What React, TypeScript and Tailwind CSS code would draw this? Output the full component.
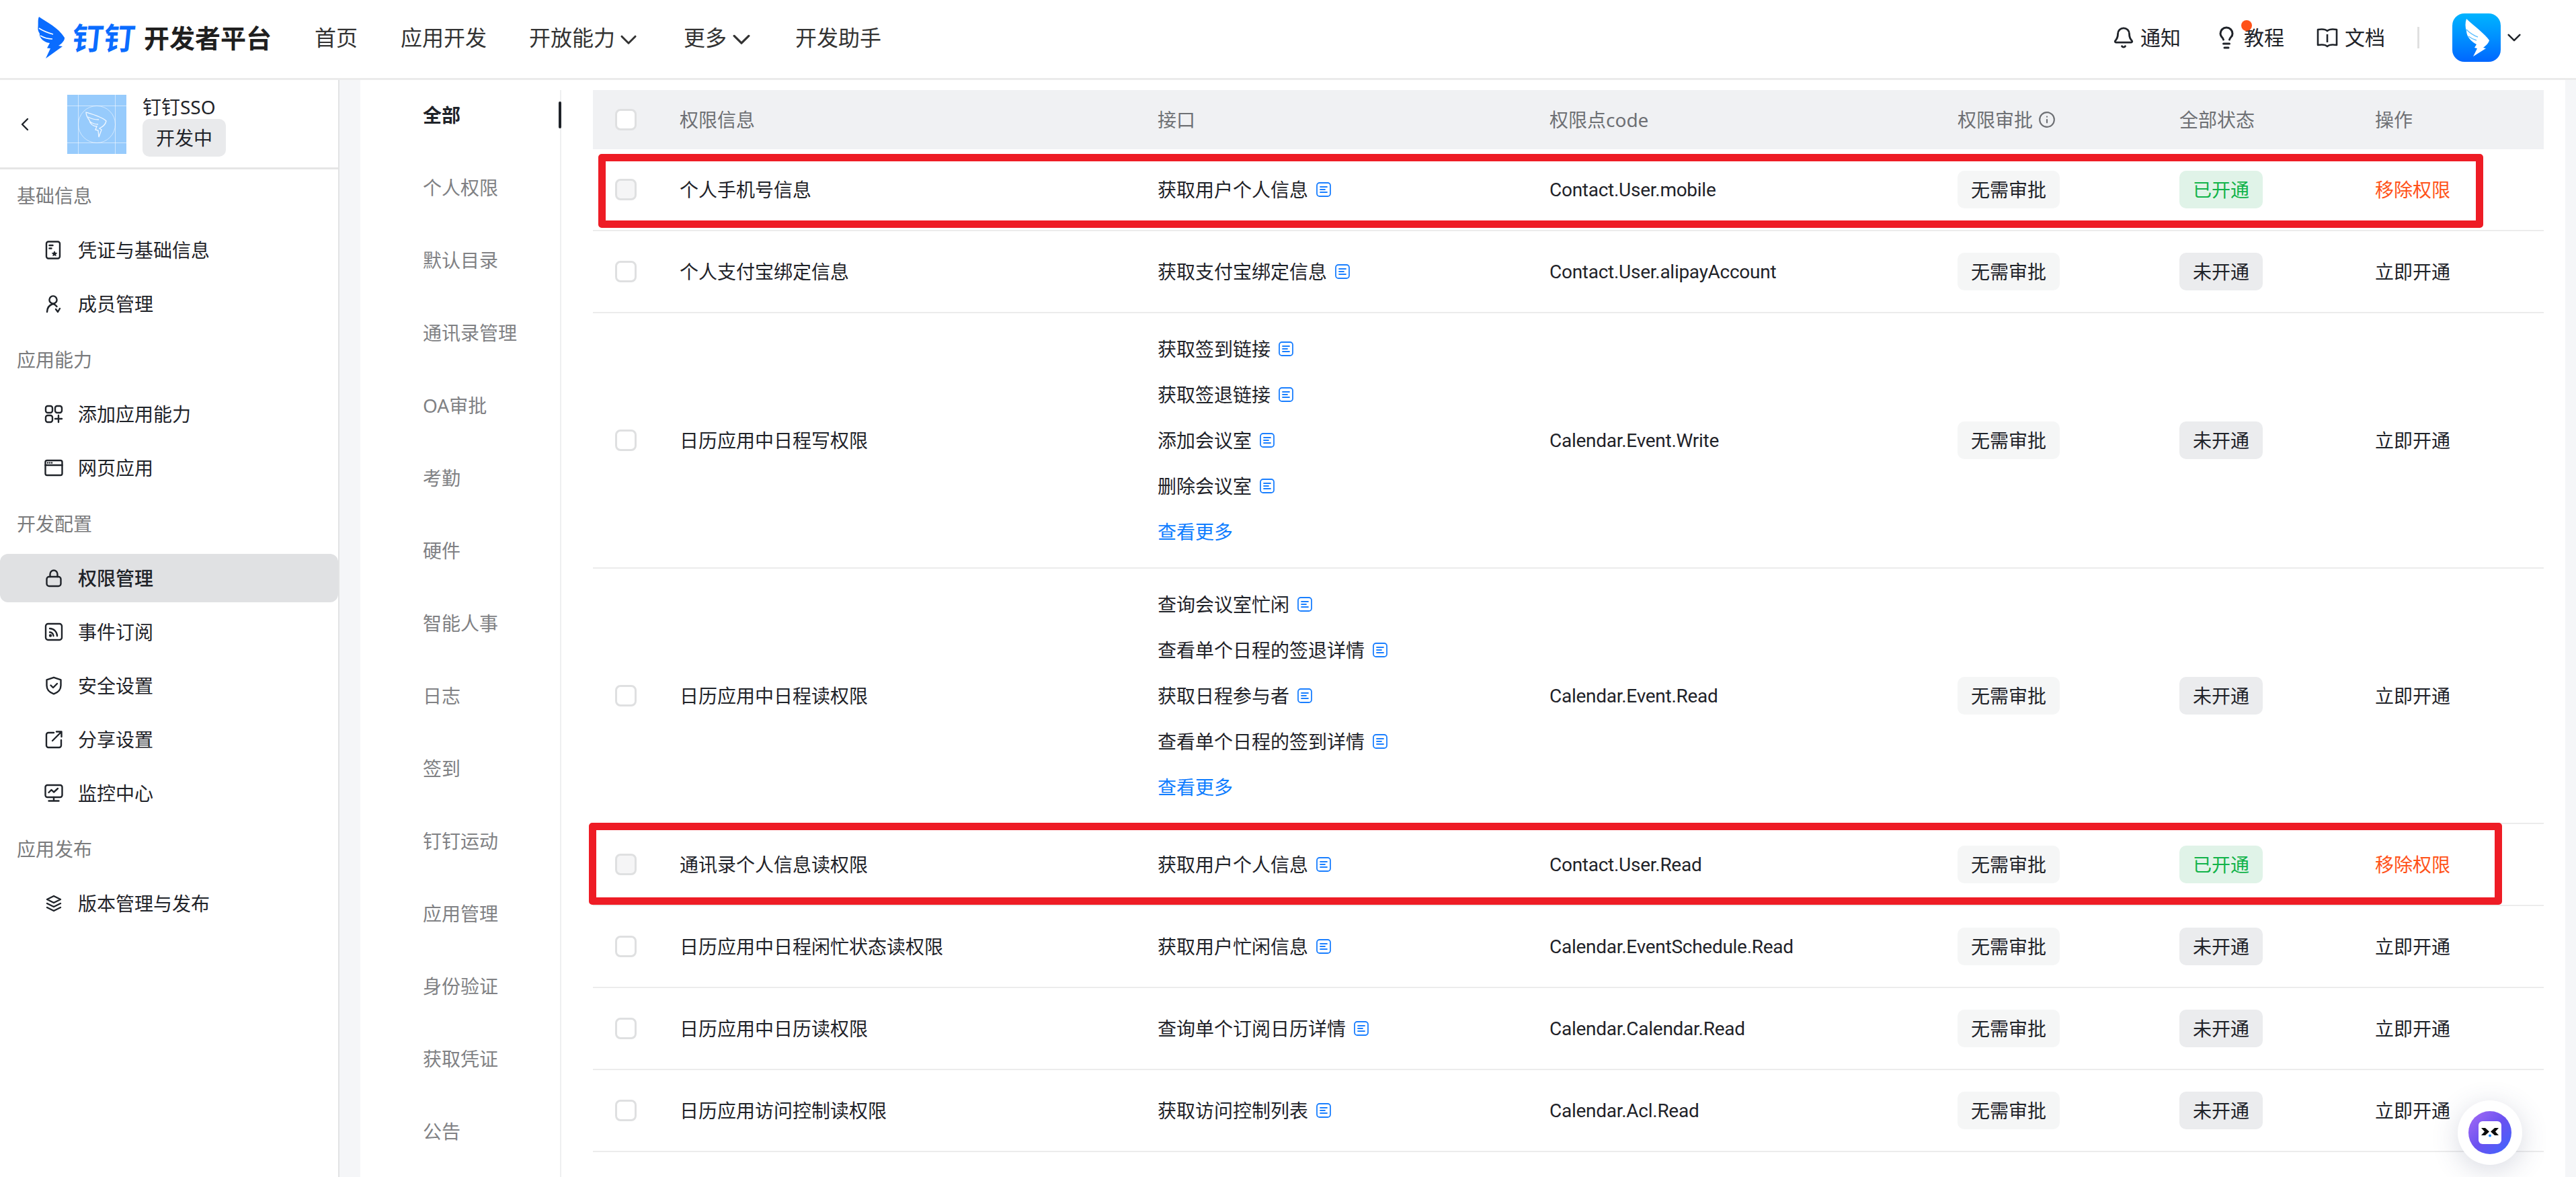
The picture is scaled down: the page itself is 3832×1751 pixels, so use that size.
import { Bell, ChevronLeft, Info, Lightbulb } from "lucide-react"
import type { ReactNode } from "react"

type Row = {
  name: string
  apis: string[]
  more?: boolean
  code: string
  open?: boolean
}

const rows: Row[] = [
  { name: "个人手机号信息", apis: ["获取用户个人信息"], code: "Contact.User.mobile", open: true },
  { name: "个人支付宝绑定信息", apis: ["获取支付宝绑定信息"], code: "Contact.User.alipayAccount" },
  {
    name: "日历应用中日程写权限",
    apis: ["获取签到链接", "获取签退链接", "添加会议室", "删除会议室"],
    more: true,
    code: "Calendar.Event.Write",
  },
  {
    name: "日历应用中日程读权限",
    apis: ["查询会议室忙闲", "查看单个日程的签退详情", "获取日程参与者", "查看单个日程的签到详情"],
    more: true,
    code: "Calendar.Event.Read",
  },
  { name: "通讯录个人信息读权限", apis: ["获取用户个人信息"], code: "Contact.User.Read", open: true },
  { name: "日历应用中日程闲忙状态读权限", apis: ["获取用户忙闲信息"], code: "Calendar.EventSchedule.Read" },
  { name: "日历应用中日历读权限", apis: ["查询单个订阅日历详情"], code: "Calendar.Calendar.Read" },
  { name: "日历应用访问控制读权限", apis: ["获取访问控制列表"], code: "Calendar.Acl.Read" },
]

const subNav = [
  "全部",
  "个人权限",
  "默认目录",
  "通讯录管理",
  "OA审批",
  "考勤",
  "硬件",
  "智能人事",
  "日志",
  "签到",
  "钉钉运动",
  "应用管理",
  "身份验证",
  "获取凭证",
  "公告",
]

function Ico({ children }: { children: ReactNode }) {
  return (
    <svg width="28" height="28" viewBox="0 0 28 28" fill="none" stroke="currentColor" strokeWidth="2.4" strokeLinecap="round" strokeLinejoin="round">
      {children}
    </svg>
  )
}

const sideIcons: Record<string, ReactNode> = {
  cred: (
    <Ico>
      <rect x="3" y="1.5" width="20" height="25" rx="3" />
      <path d="M7.5 7h5M7.5 11.5h3" />
      <path d="M15 15l1.4 2.8 3 .4-2.2 2.1.5 3-2.7-1.4-2.7 1.4.5-3-2.2-2.1 3-.4z" fill="currentColor" stroke="none" />
    </Ico>
  ),
  member: (
    <Ico>
      <circle cx="13" cy="8" r="5.6" />
      <path d="M4 26c0-6 3-10 9-12 2 .6 4 2 5.5 4M17 22l3 4 3-5" />
    </Ico>
  ),
  add: (
    <Ico>
      <rect x="2" y="2" width="10" height="10" rx="3" />
      <rect x="16" y="2" width="10" height="10" rx="3" />
      <rect x="2" y="16" width="10" height="10" rx="3" />
      <path d="M21 16v10M16 21h10" />
    </Ico>
  ),
  web: (
    <Ico>
      <rect x="1.5" y="3" width="25" height="22" rx="2.5" />
      <path d="M1.5 10h25" />
      <path d="M5 6.5h.1M8 6.5h.1M11 6.5h.1" />
    </Ico>
  ),
  lock: (
    <Ico>
      <rect x="3.5" y="12" width="21" height="14" rx="3.5" />
      <path d="M8.5 12V8a5.5 5.5 0 0 1 11 0v4" />
    </Ico>
  ),
  rss: (
    <Ico>
      <rect x="2" y="2" width="24" height="24" rx="3.5" />
      <path d="M8 9c6 0 11 5 11 11M8 14.5c3 0 5.500 2.500 5.500 5.500" />
      <circle cx="9" cy="19.500" r="1" fill="currentColor" />
    </Ico>
  ),
  shield: (
    <Ico>
      <path d="M14 1.800l10.500 3.500v8.500c0 6-4.500 10.500-10.500 12.500-6-2-10.500-6.500-10.500-12.500V5.300z" />
      <path d="M9.500 13.500l3.500 3.500 6-6" />
    </Ico>
  ),
  share: (
    <Ico>
      <path d="M25 15v8a3 3 0 0 1-3 3H6a3 3 0 0 1-3-3V7a3 3 0 0 1 3-3h8" />
      <path d="M12 16L25.500 2.500M18 2.500h7.500V10" />
    </Ico>
  ),
  monitor: (
    <Ico>
      <rect x="1.500" y="2" width="25" height="18" rx="3" />
      <path d="M6.500 13l4-4 3.500 3.500 6-5.500" />
      <path d="M14 20v5M6.500 25.500h15" />
    </Ico>
  ),
  layers: (
    <Ico>
      <path d="M14 3l10 5-10 5-10-5z" />
      <path d="M4 14l10 5 10-5M4 20l10 5 10-5" />
    </Ico>
  ),
}

const sideNav: { label: string; items: { icon: string; label: string; active?: boolean }[] }[] = [
  {
    label: "基础信息",
    items: [
      { icon: "cred", label: "凭证与基础信息" },
      { icon: "member", label: "成员管理" },
    ],
  },
  {
    label: "应用能力",
    items: [
      { icon: "add", label: "添加应用能力" },
      { icon: "web", label: "网页应用" },
    ],
  },
  {
    label: "开发配置",
    items: [
      { icon: "lock", label: "权限管理", active: true },
      { icon: "rss", label: "事件订阅" },
      { icon: "shield", label: "安全设置" },
      { icon: "share", label: "分享设置" },
      { icon: "monitor", label: "监控中心" },
    ],
  },
  {
    label: "应用发布",
    items: [{ icon: "layers", label: "版本管理与发布" }],
  },
]

function Wing({ className }: { className?: string }) {
  return (
    <svg className={className} viewBox="0 0 40 62">
      <path fill="#0a6cff" d="M2 0C12 7 31 16 40 31c.5 4-4 9-9 12l6 1-25 18 7-15-5-.5 4-7.500C9 38 2 31 3 25 1 22 0 19 .5 16 1 9 0 4 2 0z" />
      <path d="M2 17c6 4 14 7 21 9M4 28c5 3 12 5 18 5" fill="none" stroke="#fff" strokeWidth="1.600" />
    </svg>
  )
}

function Chevron({ w = 24 }: { w?: number }) {
  return (
    <svg width={w} height={w * 0.6} viewBox="0 0 24 14" fill="none" stroke="currentColor" strokeWidth="3" strokeLinecap="round" strokeLinejoin="round">
      <path d="M2 2l10 10L22 2" />
    </svg>
  )
}

function DocIcon() {
  return (
    <svg width="22" height="22" viewBox="0 0 22 22" fill="none" stroke="#1a7fff" strokeWidth="1.800" strokeLinecap="round" className="shrink-0">
      <rect x="1" y="1" width="20" height="20" rx="4" />
      <path d="M6 7h10M6 11h7M6 15h10" />
    </svg>
  )
}

function Checkbox({ disabled }: { disabled?: boolean }) {
  return <span className={`block h-[32px] w-[32px] rounded-[8px] border-[3px] border-[#dfe0e1] ${disabled ? "bg-[#f5f5f6]" : "bg-white"}`} />
}

function Tag({ children, className }: { children: ReactNode; className: string }) {
  return <span className={`inline-flex h-[56px] items-center rounded-[10px] px-[20px] ${className}`}>{children}</span>
}

const gridCols = "grid grid-cols-[129px_711px_583px_607px_330px_291px_251px] items-center"

export default function App() {
  return (
    <div className="relative h-[1751px] w-[3832px] overflow-hidden bg-[#f5f6f8] font-['Noto_Sans','Noto_Sans_CJK_SC',sans-serif] text-[28px] leading-[40px] text-[#1f2329]">
      <header className="flex h-[119px] items-center border-b-[3px] border-[#ebebeb] bg-white pb-[4px]">
        <div className="ml-[56px] flex items-center">
          <Wing className="h-[62px] w-[40px]" />
          <span className="ml-[12px] inline-block w-[96px] -skew-x-6 text-[46px] font-bold leading-[50px] tracking-[1px] text-[#0a6cff]">钉钉</span>
          <span className="ml-[10px] text-[38px] font-bold leading-[50px] text-[#1f1f1f]">开发者平台</span>
        </div>
        <nav className="ml-[64px] flex items-center text-[32px] text-[#333]">
          <span>首页</span>
          <span className="ml-[64px]">应用开发</span>
          <span className="ml-[63px] flex items-center">
            开放能力
            <span className="ml-[8px] mt-[6px]">
              <Chevron />
            </span>
          </span>
          <span className="ml-[70px] flex items-center">
            更多
            <span className="ml-[9px] mt-[6px]">
              <Chevron w={26} />
            </span>
          </span>
          <span className="ml-[67px]">开发助手</span>
        </nav>
        <div className="ml-auto flex items-center text-[30px]">
          <Bell size={34} strokeWidth={2} className="mr-[8px]" />
          <span>通知</span>
          <span className="relative ml-[50px] mr-[8px] flex items-center">
            <Lightbulb size={36} strokeWidth={2} />
            <span className="absolute -right-[20px] -top-[8px] h-[16px] w-[16px] rounded-full bg-[#ff5219]" />
          </span>
          <span>教程</span>
          <svg width="32" height="30" viewBox="0 0 32 30" fill="none" stroke="#1f2329" strokeWidth="2.600" strokeLinejoin="round" className="ml-[48px] mr-[10px]">
            <path d="M16 5C13 2 8 2 2 3v23c6-1 11-1 14 2 3-3 8-3 14-2V3c-6-1-11-1-14 2z" />
            <path d="M16 10v12" />
          </svg>
          <span>文档</span>
          <span className="ml-[48px] h-[32px] w-[3px] bg-[#e0e0e0]" />
          <div className="ml-[49px] h-[72px] w-[72px] overflow-hidden rounded-[18px] bg-gradient-to-b from-[#00b4ff] to-[#0066ff]">
            <svg width="72" height="72" viewBox="0 0 72 72">
              <path fill="#fff" d="M21 8C34 20 48 30 55 40c-1 4-5 8-9 11l4 1-19 12 6-12-4-1 3-5C28 42 21 34 21 26c-2-6-2-12 0-18z" />
              <path d="M21 24c5 5 11 9 17 11M24 34c4 3 8 5 12 6" fill="none" stroke="#5cc0ff" strokeWidth="1.500" />
            </svg>
          </div>
          <span className="ml-[10px] mr-[82px]">
            <Chevron w={20} />
          </span>
        </div>
      </header>

      <div className="flex h-[1632px]">
        <aside className="h-full w-[505px] shrink-0 border-r-[2px] border-[#e2e3e4] bg-white">
          <div className="flex h-[133px] items-start border-b-[3px] border-[#e5e5e5] pt-[22px]">
            <ChevronLeft size={32} strokeWidth={1.8} className="ml-[21px] mt-[28px]" />
            <div className="ml-[47px] h-[88px] w-[88px] shrink-0 bg-[#97cbfc]">
              <svg viewBox="0 0 88 88" className="h-full w-full" fill="none" stroke="#fff" strokeOpacity="0.55">
                <path d="M16.500 0v88M71.500 0v88M0 16.500h88M0 71.500h88" />
                <circle cx="44" cy="44" r="27.500" />
                <path strokeOpacity="0.85" strokeWidth="1.300" d="M28 26C38 29 52 33 58 39 57 44 52 48 48 50L51 52 47 63 46 53 42 52 44 47C38 47 34 43 33 38 30 34 28 30 28 26z" />
                <path strokeOpacity="0.85" strokeWidth="1.300" d="M31 33C36 36 42 37 47 37M34 40C38 43 42 44 46 44" />
              </svg>
            </div>
            <div className="ml-[24px]">
              <div className="-mt-[2px] h-[38px]">钉钉SSO</div>
              <span className="inline-flex h-[56px] items-center rounded-[10px] bg-[#e9eaec] px-[20px]">开发中</span>
            </div>
          </div>
          <div className="flex flex-col gap-[23px] pt-[15px]">
            {sideNav.map((section) => (
              <div key={section.label}>
                <div className="mb-[21px] flex h-[48px] items-center pl-[25px] text-[#7a7b7d]">{section.label}</div>
                <div className="flex flex-col gap-[8px]">
                  {section.items.map((item) => (
                    <div
                      key={item.label}
                      className={`flex h-[72px] items-center rounded-[12px] pl-[66px] ${item.active ? "bg-[#e0e1e3] font-medium" : ""}`}
                    >
                      {sideIcons[item.icon]}
                      <span className="ml-[22px]">{item.label}</span>
                    </div>
                  ))}
                </div>
              </div>
            ))}
          </div>
        </aside>

        <main className="ml-[31px] flex h-full w-[3280px] bg-white">
          <div className="mt-[15px] w-[299px] shrink-0 border-r-[2px] border-[#eeeff0] pt-[17px] text-[#808184]">
            {subNav.map((item, i) => (
              <div key={item} className="mb-[68px] flex h-[40px] items-center justify-between pl-[93px]">
                <span className={i === 0 ? "font-bold text-[#1f2329]" : ""}>{item}</span>
                {i === 0 && <span className="-mr-[2px] h-[40px] w-[4px] rounded-full bg-[#1f2329]" />}
              </div>
            ))}
          </div>

          <section className="ml-[47px] mt-[15px] w-[2902px]">
            <div className={`${gridCols} h-[88px] bg-[#f0f1f3] text-[#6e7074]`}>
              <span className="pl-[33px]">
                <Checkbox />
              </span>
              <span>权限信息</span>
              <span>接口</span>
              <span>权限点code</span>
              <span className="flex items-center gap-[8px]">
                权限审批
                <Info size={26} strokeWidth={2} />
              </span>
              <span>全部状态</span>
              <span>操作</span>
            </div>
            {rows.map((row) => (
              <div key={row.code} className={`${gridCols} border-b-[2px] border-[#ececec] ${row.apis.length > 1 ? "py-[33px]" : "h-[122px]"}`}>
                <span className="pl-[33px]">
                  <Checkbox disabled={row.open} />
                </span>
                <span>{row.name}</span>
                <div className="flex flex-col gap-[28px]">
                  {row.apis.map((api) => (
                    <span key={api} className="flex items-center gap-[12px]">
                      {api}
                      <DocIcon />
                    </span>
                  ))}
                  {row.more && <span className="text-[#0f7dff]">查看更多</span>}
                </div>
                <span className="pt-[2px] font-['Roboto',sans-serif] tracking-[-0.27px]">{row.code}</span>
                <span className="flex">
                  <Tag className="bg-[#f5f6f6]">无需审批</Tag>
                </span>
                <span className="flex">
                  {row.open ? (
                    <Tag className="bg-[#e0f3e8] text-[#12b34a]">已开通</Tag>
                  ) : (
                    <Tag className="bg-[#ebecee]">未开通</Tag>
                  )}
                </span>
                <span className={row.open ? "text-[#ff5219]" : ""}>{row.open ? "移除权限" : "立即开通"}</span>
              </div>
            ))}
          </section>
        </main>
      </div>

      {/* annotations drawn on top of the screenshot */}
      <div className="absolute left-[890px] top-[229px] h-[110px] w-[2804px] rounded-[5px] border-[11px] border-[#ee1c25]" />
      <div className="absolute left-[876px] top-[1224px] h-[122px] w-[2846px] rounded-[5px] border-[11px] border-[#ee1c25]" />

      <div className="absolute left-[3656px] top-[1637px] flex h-[96px] w-[96px] items-center justify-center rounded-full bg-white shadow-[0_8px_40px_rgba(60,70,110,0.2)]">
        <div className="flex h-[64px] w-[64px] items-center justify-center rounded-full bg-gradient-to-br from-[#a86bf5] via-[#6a50f0] to-[#2f66ff]">
          <div className="flex h-[34px] w-[34px] items-center justify-center rounded-[6px] bg-white">
            <svg width="26" height="16" viewBox="0 0 26 16">
              <path d="M0 1h6l6 5.500-6 5.500H0l5-5.500zM26 1h-6l-6 5.500 6 5.500h6l-5-5.500z" fill="#0b0b0b" />
              <circle cx="13" cy="12.500" r="2" fill="#1a8cff" />
            </svg>
          </div>
        </div>
      </div>
    </div>
  )
}
